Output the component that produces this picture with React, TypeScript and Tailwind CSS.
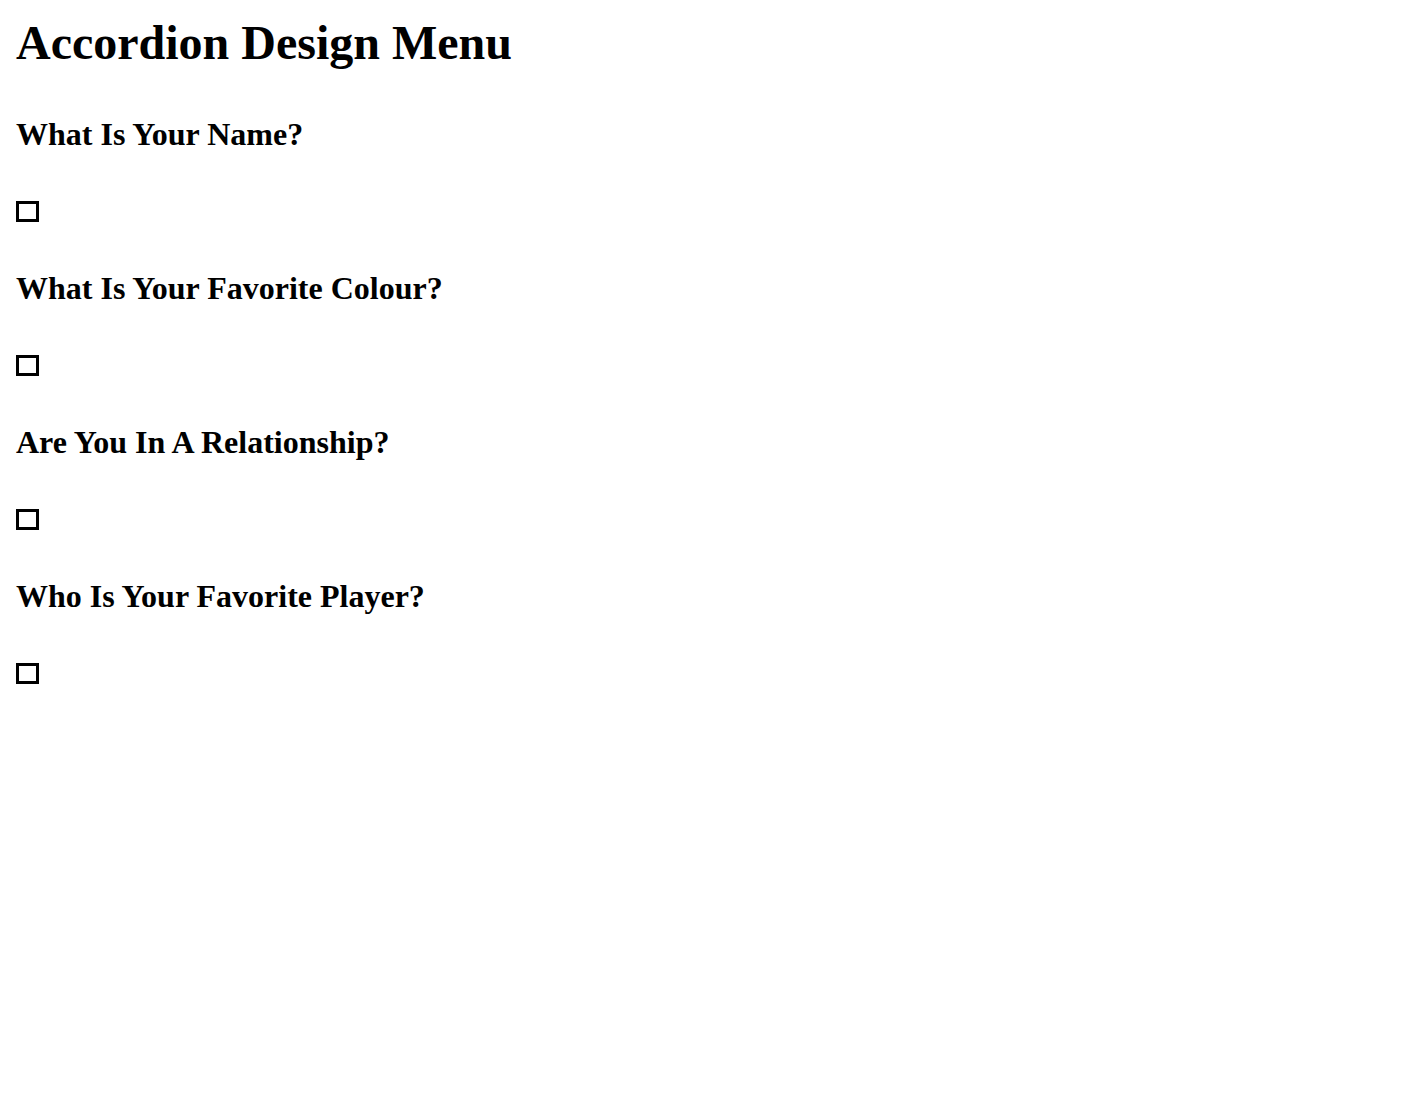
const questions = [
    'What Is Your Name?',
    'What Is Your Favorite Colour?',
    'Are You In A Relationship?',
    'Who Is Your Favorite Player?',
];

export default function App() {
    return (
        <div className="min-h-screen bg-white px-4 text-black font-['Liberation_Serif',serif]">
            <h1 className="pt-[15px] text-[48px] font-bold leading-[56px]">
                Accordion Design Menu
            </h1>
            <div className="mt-[43px] flex flex-col">
                {questions.map((q) => (
                    <div key={q} className="h-[154px]">
                        <h2 className="text-[32px] font-bold leading-[40px]">{q}</h2>
                        <div className="mt-[47px] h-[21px] w-[23px] border-[3px] border-black" />
                    </div>
                ))}
            </div>
        </div>
    );
}
